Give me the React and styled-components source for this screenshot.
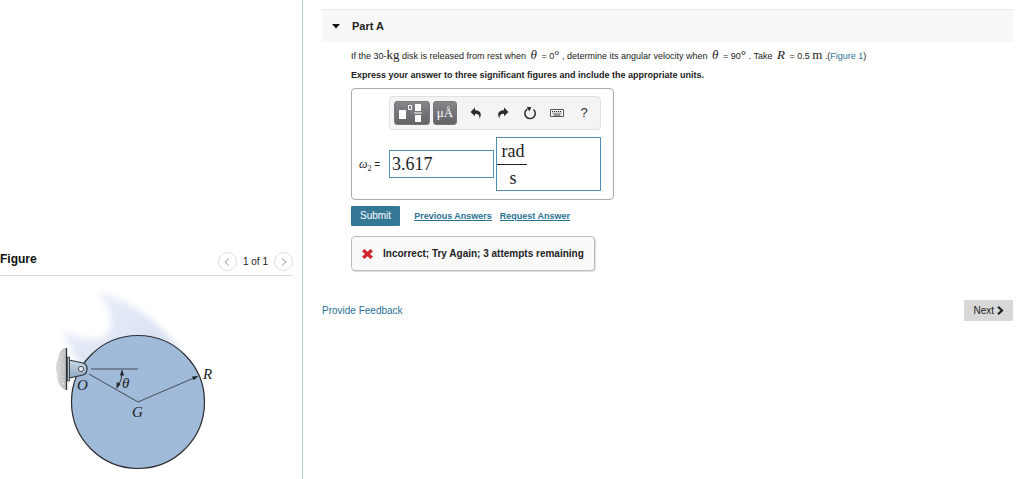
import { useState } from "react";
import styled, { createGlobalStyle } from "styled-components";

const BLUE = "#2a7294";
const SERIF = '"Liberation Serif", "Times New Roman", serif';

const DiskFigure = () => (
  <FigureImage viewBox="0 0 220 190" role="img" aria-label="Disk pinned at O">
    <defs>
      <filter id="soft" x="-20%" y="-20%" width="140%" height="140%">
        <feGaussianBlur stdDeviation="3" />
      </filter>
      <linearGradient id="sweep" gradientUnits="userSpaceOnUse" x1="84" y1="10" x2="128" y2="70">
        <stop offset="0" stopColor="#e4eaf6" stopOpacity="0.7" />
        <stop offset="0.5" stopColor="#e2e9f6" />
        <stop offset="1" stopColor="#d9e2f2" />
      </linearGradient>
      <linearGradient id="wall" x1="0" y1="0" x2="1" y2="0">
        <stop offset="0" stopColor="#dcdcdc" />
        <stop offset="1" stopColor="#bdbebf" />
      </linearGradient>
      <linearGradient id="bracket" x1="0" y1="0" x2="0" y2="1">
        <stop offset="0" stopColor="#c9dae8" />
        <stop offset="1" stopColor="#8ea9c1" />
      </linearGradient>
    </defs>
    <path
      d="M97 2C128 8 158 30 182 62L140 74L88 88C80 76 70 58 62 40C74 46 90 52 102 48C114 42 116 26 97 2Z"
      fill="url(#sweep)"
      filter="url(#soft)"
    />
    <circle cx="138" cy="112" r="66.5" fill="#a0bad9" stroke="#2b2d31" strokeWidth="1.2" />
    <path
      d="M66 58C60 58 59 64 58 69C55 74 56 80 57 84C57 91 60 99 66 100Z"
      fill="url(#wall)"
    />
    <path
      d="M61 67l1 1M63 75l1 1M59 80l1 1M62 86l1 1M63 93l1 1M60 73l1 0M64 63l0 1"
      stroke="#f3f3f3"
      strokeWidth="1"
    />
    <path d="M66.5 58V100" stroke="#2f3338" strokeWidth="1.3" />
    <path d="M69 70L83 73Q87 74 87 79Q87 84 83 85L69 88Z" fill="url(#bracket)" stroke="#2f3338" strokeWidth="1.2" />
    <path d="M67.5 67H69.5V91H67.5Z" fill="#aebfce" stroke="#2f3338" strokeWidth="0.8" />
    <circle cx="81" cy="79" r="2.6" fill="#e8e8e8" stroke="#3d4247" strokeWidth="0.9" />
    <path d="M91 79H138M89 84L138 112L195 87.5" fill="none" stroke="#3a3f47" strokeWidth="0.9" />
    <path d="M122 83Q122 90 118 96" fill="none" stroke="#22252a" strokeWidth="0.9" />
    <path d="M122 79L120 85.5H124ZM116.5 99L116.8 92L120.5 94ZM198.5 86L192 86.5L193.7 90.3Z" fill="#22252a" />
    <Symbol x="77" y="100">O</Symbol>
    <Symbol x="122" y="98">θ</Symbol>
    <Symbol x="132" y="127">G</Symbol>
    <Symbol x="203" y="89">R</Symbol>
  </FigureImage>
);

const FigurePanel = () => (
  <Sidebar>
    <FigureHeader>
      <FigureTitle>Figure</FigureTitle>
      <Pager>
        <RoundButton aria-label="Previous figure">
          <svg width="6" height="8" viewBox="0 0 6 8">
            <path d="M5 0.5L1 4L5 7.5" fill="none" stroke="currentColor" />
          </svg>
        </RoundButton>
        <span>1 of 1</span>
        <RoundButton aria-label="Next figure">
          <svg width="6" height="8" viewBox="0 0 6 8">
            <path d="M1 0.5L5 4L1 7.5" fill="none" stroke="currentColor" />
          </svg>
        </RoundButton>
      </Pager>
    </FigureHeader>
    <DiskFigure />
  </Sidebar>
);

const Toolbar = () => (
  <ToolbarBox role="toolbar" aria-label="Math editor">
    <DarkButton $wide aria-label="Templates">
      <svg width="28" height="20" viewBox="0 0 28 20">
        <path d="M1 7h7v9H1zM17 1h6v7h-6zM17 12h6v7h-6z" fill="#fff" />
        <path d="M10.5 2.500h3v4h-3z" fill="none" stroke="#fff" />
        <path d="M16 10h8" stroke="#fff" />
      </svg>
    </DarkButton>
    <DarkButton aria-label="Units">μÅ</DarkButton>
    <Tools>
      <ToolButton aria-label="Undo">
        <svg width="12" height="12" viewBox="0 0 12 12">
          <path d="M5 0.5V3.2C10 3.2 12.5 6.5 9.5 11.5C9.7 8 8.3 6.7 5 6.7V9.3L0.5 4.9Z" fill="currentColor" />
        </svg>
      </ToolButton>
      <ToolButton aria-label="Redo">
        <svg width="12" height="12" viewBox="0 0 12 12">
          <path d="M7 0.5V3.2C2 3.2 -0.5 6.5 2.5 11.5C2.3 8 3.7 6.7 7 6.7V9.3L11.5 4.9Z" fill="currentColor" />
        </svg>
      </ToolButton>
      <ToolButton aria-label="Reset">
        <svg width="14" height="14" viewBox="0 0 14 14">
          <path d="M10.5 3.5A5.2 5.2 0 1 1 4.5 2.9" fill="none" stroke="currentColor" strokeWidth="1.5" />
          <path d="M3.8 0.8L8.5 1.2L6.2 5.5Z" fill="currentColor" />
        </svg>
      </ToolButton>
      <ToolButton aria-label="Keyboard">
        <svg width="16" height="10" viewBox="0 0 16 10">
          <path d="M1.5 1.5h13v7h-13z" fill="#fff" stroke="#555" />
          <path d="M3 3.5h10M3.5 5.2h9" stroke="currentColor" strokeDasharray="1.2 0.8" />
          <path d="M4.5 7h7" stroke="currentColor" />
        </svg>
      </ToolButton>
      <ToolButton aria-label="Help">?</ToolButton>
    </Tools>
  </ToolbarBox>
);

const AnswerForm = () => {
  const [value, setValue] = useState("3.617");
  const [unitTop, setUnitTop] = useState("rad");
  const [unitBottom, setUnitBottom] = useState("s");

  return (
    <form onSubmit={(e) => e.preventDefault()}>
      <AnswerBox>
        <Toolbar />
        <AnswerRow>
          <AnswerLabel htmlFor="answer">
            <i>ω</i>
            <sub>2</sub> =
          </AnswerLabel>
          <ValueInput id="answer" value={value} onChange={(e) => setValue(e.target.value)} />
          <UnitField>
            <UnitInput aria-label="Unit numerator" value={unitTop} onChange={(e) => setUnitTop(e.target.value)} />
            <FractionBar />
            <UnitInput aria-label="Unit denominator" value={unitBottom} onChange={(e) => setUnitBottom(e.target.value)} />
          </UnitField>
        </AnswerRow>
      </AnswerBox>
      <Actions>
        <SubmitButton type="submit">Submit</SubmitButton>
        <ActionLink href="#previous">Previous Answers</ActionLink>
        <ActionLink href="#request">Request Answer</ActionLink>
      </Actions>
    </form>
  );
};

const App = () => (
  <Page>
    <GlobalStyle />
    <FigurePanel />
    <Main>
      <PartHeader aria-expanded="true">
        <svg width="8" height="5" viewBox="0 0 8 5">
          <path d="M0 0h8L4 4.5z" fill="#111" />
        </svg>
        Part A
      </PartHeader>
      <PartBody>
        <Question>
          If the 30-<Roman>kg</Roman> disk is released from rest when <Variable>θ</Variable> = 0<Degree>°</Degree> ,
          determine its angular velocity when <Variable>θ</Variable> = 90<Degree>°</Degree> . Take{" "}
          <Variable>R</Variable> = 0.5 <Roman>m</Roman> .(<TextLink href="#figure">Figure 1</TextLink>)
        </Question>
        <Instruction>
          Express your answer to three significant figures and include the appropriate units.
        </Instruction>
        <AnswerForm />
        <Feedback role="status">
          <svg width="11" height="10" viewBox="0 0 11 10">
            <path d="M2.5 0L5.5 2.7L8.5 0L11 2.3L8 5L11 7.7L8.5 10L5.5 7.3L2.5 10L0 7.7L3 5L0 2.3Z" fill="#cf2630" />
          </svg>
          Incorrect; Try Again; 3 attempts remaining
        </Feedback>
      </PartBody>
      <Footer>
        <TextLink href="#feedback">Provide Feedback</TextLink>
        <NextButton>
          Next
          <svg width="7" height="9" viewBox="0 0 7 9">
            <path d="M1 0.8L5 4.5L1 8.2" fill="none" stroke="currentColor" strokeWidth="2.2" />
          </svg>
        </NextButton>
      </Footer>
    </Main>
  </Page>
);

export default App;

const GlobalStyle = createGlobalStyle`
  * {
    box-sizing: border-box;
  }

  body {
    margin: 0;
    background: #fff;
    color: #222;
    font: 10px/14px "Liberation Sans", Arial, sans-serif;
  }

  button, input {
    margin: 0;
    font: inherit;
    color: inherit;
  }

  svg {
    display: block;
    flex: none;
  }
`;

const Page = styled.div`
  display: flex;
  min-height: 100vh;
`;

const Sidebar = styled.aside`
  flex: none;
  width: 303px;
  padding: 248px 9px 0 0;
  border-right: 1px solid #b3c5d8;
`;

const FigureHeader = styled.header`
  display: flex;
  justify-content: space-between;
  height: 28px;
  border-bottom: 1px solid #d6d8da;
`;

const FigureTitle = styled.h2`
  margin: 0;
  padding-top: 4px;
  color: #111;
  font-size: 12px;
  line-height: 14px;
`;

const Pager = styled.div`
  display: flex;
  align-items: center;
  gap: 6px;
`;

const RoundButton = styled.button`
  display: flex;
  align-items: center;
  justify-content: center;
  width: 19px;
  height: 19px;
  padding: 0;
  border: 1px solid #dedede;
  border-radius: 50%;
  background: #fff;
  color: #999;
`;

const FigureImage = styled.svg`
  width: 220px;
  height: 190px;
  margin-top: 14px;
`;

const Symbol = styled.text`
  fill: #222;
  font: italic 15px ${SERIF};
`;

const Main = styled.main`
  flex: 1;
  min-width: 0;
  padding: 9px 11px 0 19px;
`;

const PartHeader = styled.button`
  display: flex;
  align-items: center;
  gap: 12px;
  width: 100%;
  height: 33px;
  padding: 0 10px;
  border: 0;
  border-top: 1px solid #e6e6e6;
  background: #f8f8f8;
  font-size: 11px;
  font-weight: bold;
`;

const PartBody = styled.section`
  padding: 7px 0 0 29px;
`;

const Question = styled.p`
  margin: 0;
  font-size: 9px;
  line-height: 14px;
`;

const Roman = styled.span`
  font-family: ${SERIF};
  font-size: 13px;
  line-height: 12px;
`;

const Variable = styled.i`
  margin: 0 2px;
  font-family: ${SERIF};
  font-size: 13px;
  line-height: 12px;
`;

const Degree = styled.span`
  font-family: ${SERIF};
  font-size: 13px;
  line-height: 12px;
`;

const TextLink = styled.a`
  color: ${BLUE};
  text-decoration: none;
`;

const Instruction = styled.p`
  margin: 5px 0 6px;
  font-size: 9px;
  font-weight: bold;
  line-height: 14px;
`;

const AnswerBox = styled.div`
  width: fit-content;
  padding: 7px 12px 8px 7px;
  border: 1px solid #aaa;
  border-radius: 4px;
`;

const ToolbarBox = styled.div`
  display: flex;
  align-items: center;
  gap: 3px;
  height: 34px;
  margin-left: 30px;
  padding: 0 4px;
  border: 1px solid #e0e0e0;
  border-radius: 4px;
  background: #f4f4f4;
`;

const DarkButton = styled.button`
  display: flex;
  align-items: center;
  justify-content: center;
  width: ${({ $wide }) => ($wide ? "36px" : "24px")};
  height: 24px;
  padding: 0;
  border: 1px solid #777;
  border-radius: 3px;
  background: linear-gradient(#85858a, #646468);
  color: #fff;
  font-family: ${SERIF};
  font-size: 13px;
`;

const Tools = styled.div`
  display: flex;
  flex: 1;
  justify-content: space-between;
  padding: 0 2px 0 6px;
`;

const ToolButton = styled.button`
  display: flex;
  align-items: center;
  justify-content: center;
  width: 20px;
  height: 24px;
  padding: 0;
  border: 0;
  background: none;
  color: #2b2b2b;
  font-size: 13px;
`;

const AnswerRow = styled.div`
  display: flex;
  align-items: center;
  gap: 2px;
  margin-top: 7px;
`;

const AnswerLabel = styled.label`
  width: 28px;
  white-space: nowrap;

  & > i {
    font-family: ${SERIF};
    font-size: 12px;
  }

  & > sub {
    font-family: ${SERIF};
    font-size: 8px;
    line-height: 0;
  }
`;

const ValueInput = styled.input`
  width: 105px;
  height: 28px;
  padding: 0 2px;
  border: 1px solid #4f8fb3;
  background: #fff;
  font-family: ${SERIF};
  font-size: 18px;
`;

const UnitField = styled.div`
  width: 105px;
  height: 54px;
  border: 1px solid #4f8fb3;
`;

const UnitInput = styled.input`
  display: block;
  width: 32px;
  height: 26px;
  padding: 0;
  border: 0;
  background: none;
  font-family: ${SERIF};
  font-size: 18px;
  text-align: center;
  outline: none;
`;

const FractionBar = styled.div`
  width: 30px;
  height: 1px;
  background: #222;
`;

const Actions = styled.div`
  display: flex;
  align-items: center;
  margin-top: 6px;
`;

const SubmitButton = styled.button`
  height: 20px;
  margin-right: 6px;
  padding: 0 9px;
  border: 0;
  border-radius: 1px;
  background: #347896;
  color: #fff;
`;

const ActionLink = styled.a`
  margin-left: 8px;
  color: ${BLUE};
  font-size: 9px;
  font-weight: bold;
`;

const Feedback = styled.div`
  display: flex;
  align-items: center;
  gap: 10px;
  width: fit-content;
  height: 35px;
  margin-top: 10px;
  padding: 0 10px;
  border: 1px solid #bbb;
  border-radius: 4px;
  background: #fafafa;
  box-shadow: 1px 1px 1px #ddd;
  font-weight: bold;
`;

const Footer = styled.footer`
  display: flex;
  align-items: center;
  justify-content: space-between;
  margin-top: 29px;
`;

const NextButton = styled.button`
  display: flex;
  align-items: center;
  gap: 3px;
  height: 21px;
  padding: 0 9px;
  border: 0;
  border-radius: 1px;
  background: #d8d8d8;
`;
